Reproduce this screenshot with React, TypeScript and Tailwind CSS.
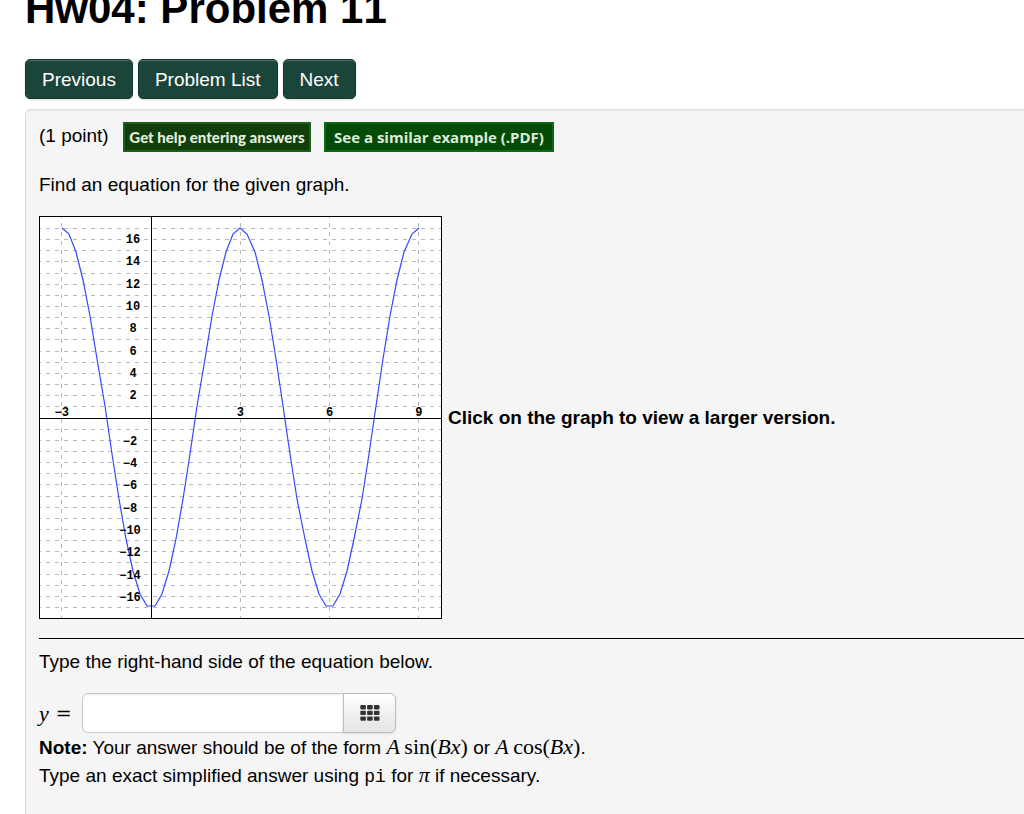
import React from "react";

const SIZE = 403;
const ORIGIN_X = 112;
const ORIGIN_Y = 202;
const UNIT_X = 29.75;
const UNIT_Y = 11.15;

const px = (x: number) => ORIGIN_X + x * UNIT_X;
const py = (y: number) => ORIGIN_Y - y * UNIT_Y;

const rows = Array.from({ length: 35 }, (_, i) => i - 17).filter((v) => v !== 0);
const columns = [-3, 3, 6, 9];
const yLabels = [16, 14, 12, 10, 8, 6, 4, 2, -2, -4, -6, -8, -10, -12, -14, -16];
const curve = Array.from({ length: 51 }, (_, i) => {
  const x = -3 + i * 0.24;
  return `${Math.round(px(x))},${Math.round(py(-17 * Math.cos((Math.PI * x) / 3)))}`;
}).join(" ");

function Graph() {
  return (
    <svg
      viewBox={`0 0 ${SIZE} ${SIZE}`}
      className="block size-[403px] shrink-0 bg-white"
      role="img"
      aria-label="Graph of a periodic function"
    >
      <g stroke="#b8b8b8" strokeWidth="1" shapeRendering="crispEdges">
        {rows.map((v) => (
          <line key={v} x1="0" x2={SIZE} y1={Math.floor(py(v)) + 0.5} y2={Math.floor(py(v)) + 0.5} strokeDasharray="4 4.93" strokeDashoffset="2" />
        ))}
        {columns.map((v) => (
          <line key={v} y1="0" y2={SIZE} x1={Math.floor(px(v)) + 0.5} x2={Math.floor(px(v)) + 0.5} strokeDasharray="4 4.93" strokeDashoffset="2" />
        ))}
      </g>
      <g fill="#fff">
        {yLabels.map((v) => (
          <rect key={v} x={v > 0 ? 86 : 81} y={py(v) - 5} width={v > 0 ? 16 : 21} height="10" />
        ))}
      </g>
      <polyline points={curve} fill="none" stroke="#3347ff" strokeWidth="1.2" />
      <g stroke="#000" strokeWidth="1" fill="none" shapeRendering="crispEdges">
        <line x1="112.5" x2="112.5" y1="0" y2={SIZE} />
        <line y1="202.5" y2="202.5" x1="0" x2={SIZE} />
        <rect x="0.5" y="0.5" width="402" height="402" />
      </g>
      <g className="font-['Liberation_Mono',monospace] text-[12px] font-bold" textAnchor="middle">
        {yLabels.map((v) => (
          <text key={v} x={v > 0 ? 94 : 91} y={Math.floor(py(v)) + 4 + (v < 0 ? 1 : 0)}>
            {String(v).replace("-", "−")}
          </text>
        ))}
        {columns.map((v) => (
          <text key={v} x={px(v)} y="200">
            {String(v).replace("-", "−")}
          </text>
        ))}
      </g>
    </svg>
  );
}

function NavButton({ children }: { children: React.ReactNode }) {
  return (
    <button
      type="button"
      className="h-10 rounded-[5px] border border-[#12392f] bg-[#1b453a] px-4 text-white shadow-[inset_0_1px_0_rgba(255,255,255,0.22),0_1px_2px_rgba(0,0,0,0.15)]"
    >
      {children}
    </button>
  );
}

function Fn({ name }: { name: string }) {
  return (
    <span className="font-['Liberation_Serif',serif] text-[22px]">
      <i>A</i>&#8201;{name}(<i>Bx</i>)
    </span>
  );
}

export default function App() {
  return (
    <div className="flex min-h-screen flex-col overflow-hidden bg-white pl-[25px] font-['Liberation_Sans',sans-serif] text-[19px] leading-[27px] text-black">
      <h1 className="-mt-3 text-[42px] leading-[42px] font-bold [font-kerning:none]">Hw04: Problem 11</h1>
      <nav className="mt-[29px] flex gap-[5px]">
        <NavButton>Previous</NavButton>
        <NavButton>Problem List</NavButton>
        <NavButton>Next</NavButton>
      </nav>
      <main className="mt-[10px] flex-1 rounded-tl-[5px] border-t border-l border-[#dcdcdc] bg-[#f5f5f5] pt-3 pb-6 pl-[13px] shadow-[inset_0_1px_2px_rgba(0,0,0,0.06)]">
        <div className="flex items-start">
          <span className="w-[84px]">(1 point)</span>
          <a
            href="#help"
            className="flex h-[30px] w-[188px] items-center justify-center border-2 border-[#1a601a] bg-[#123e0c] font-['Lato',sans-serif] text-[15px] font-black whitespace-nowrap text-[#e2eedc]"
          >
            Get help entering answers
          </a>
          <a
            href="#example"
            className="ml-[13px] flex h-[30px] w-[230px] items-center justify-center border-2 border-[#0c6a12] bg-[#034b06] font-['Open_Sans',sans-serif] text-[15px] font-bold whitespace-nowrap text-[#dcebd8]"
          >
            See a similar example (.PDF)
          </a>
        </div>
        <p className="mt-[19px]">Find an equation for the given graph.</p>
        <div className="mt-[18px] flex items-center gap-[6px]">
          <a href="#graph">
            <Graph />
          </a>
          <b>Click on the graph to view a larger version.</b>
        </div>
        <hr className="mt-[19px] border-black" />
        <p className="mt-[9px]">Type the right-hand side of the equation below.</p>
        <div className="mt-[18px] flex items-center">
          <label htmlFor="answer" className="flex w-[43px] gap-[7px] font-['Liberation_Serif',serif] text-[22px]">
            <i>y</i>
            <span className="font-['DejaVu_Serif',serif] text-[19px]">=</span>
          </label>
          <input
            id="answer"
            type="text"
            className="h-10 w-[262px] rounded-l-[6px] border border-[#c8c8c8] bg-white px-2 shadow-[inset_0_1px_2px_rgba(0,0,0,0.08)] outline-none"
          />
          <button
            type="button"
            aria-label="Open equation editor"
            className="-ml-px flex h-10 w-[53px] items-center justify-center rounded-r-[6px] border border-[#bdbdbd] bg-linear-to-b from-white to-[#e4e4e4] shadow-[0_1px_2px_rgba(0,0,0,0.1)]"
          >
            <svg viewBox="0 0 20 16" className="h-4 w-5" fill="#333">
              {[0, 5.7, 11.4].map((y) =>
                [0.3, 7.1, 13.9].map((x) => <rect key={`${x}-${y}`} x={x} y={y} width="5.6" height="4.4" rx="1" />)
              )}
            </svg>
          </button>
        </div>
        <p>
          <b>Note:</b> Your answer should be of the form <Fn name="sin" /> or <Fn name="cos" />.
        </p>
        <p>
          Type an exact simplified answer using <code className="font-['Liberation_Mono',monospace] text-[18px]">pi</code> for{" "}
          <i className="font-['Liberation_Serif',serif] text-[22px]">π</i> if necessary.
        </p>
      </main>
    </div>
  );
}
